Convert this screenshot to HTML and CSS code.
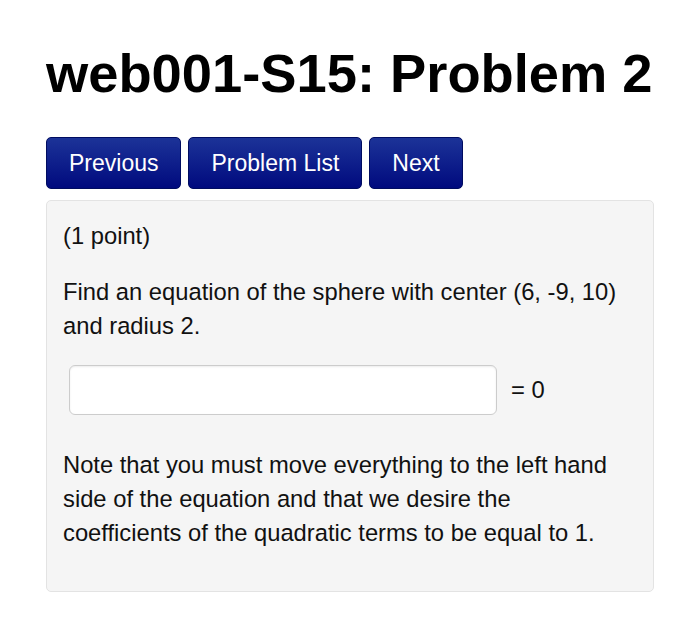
FILE: index.html
```html
<!DOCTYPE html>
<html lang="en">
<head>
  <meta charset="UTF-8" />
  <meta name="viewport" content="width=device-width, initial-scale=1.0"/>
  <title>web001-S15: Problem 2</title>
  <link rel="stylesheet" href="styles.css">
</head>
<body>
  <div class="page">
    <h1 class="problem-title">web001-S15: Problem 2</h1>

    <div class="nav-buttons">
      <a href="#" class="btn">Previous</a>
      <a href="#" class="btn">Problem List</a>
      <a href="#" class="btn">Next</a>
    </div>

    <div class="problem-box">
      <p class="points">(1 point)</p>
      <p>Find an equation of the sphere with center (6, -9, 10) and radius 2.</p>
      <div class="answer-row">
        <input type="text" class="answer-input">
        <span class="answer-suffix">= 0</span>
      </div>
      <p>Note that you must move everything to the left hand side of the equation and that we desire the coefficients of the quadratic terms to be equal to 1.</p>
    </div>
  </div>
</body>
</html>
```

FILE: styles.css
```css
* {
  margin: 0;
  padding: 0;
  box-sizing: border-box;
}

body {
  font-family: 'Liberation Sans', Arial, sans-serif;
  background-color: #fff;
  color: #111;
}

.page {
  padding: 41px 46px 0 46px;
}

.problem-title {
  font-size: 54.3px;
  font-weight: bold;
  line-height: 1.2;
  color: #000;
  white-space: nowrap;
  margin-bottom: 31px;
}

.nav-buttons {
  display: flex;
  gap: 7px;
  margin-bottom: 11px;
}

.btn {
  display: inline-block;
  height: 52px;
  line-height: 50px;
  padding: 0 22px;
  font-size: 23px;
  color: #fff;
  text-decoration: none;
  background: linear-gradient(#1c3398, #000a7e);
  border: 1px solid #000c60;
  border-radius: 5px;
}

.problem-box {
  background-color: #f5f5f5;
  border: 1px solid #e3e3e3;
  border-radius: 5px;
  padding: 18px 26px 41px 16px;
  font-size: 23.75px;
  line-height: 34px;
  width: 608px;
}

.problem-box p {
  margin-bottom: 22px;
}

.problem-box p:last-child {
  margin-bottom: 0;
}

.answer-row {
  display: flex;
  align-items: center;
  margin: 3px 0 33px 6px;
}

.answer-input {
  width: 428px;
  height: 50px;
  background: #fff;
  border: 1px solid #ccc;
  border-radius: 6px;
  box-shadow: inset 0 1px 2px rgba(0, 0, 0, 0.08);
  font-size: 22px;
  margin-right: 14px;
}

.answer-suffix {
  font-size: 23.75px;
}
```
